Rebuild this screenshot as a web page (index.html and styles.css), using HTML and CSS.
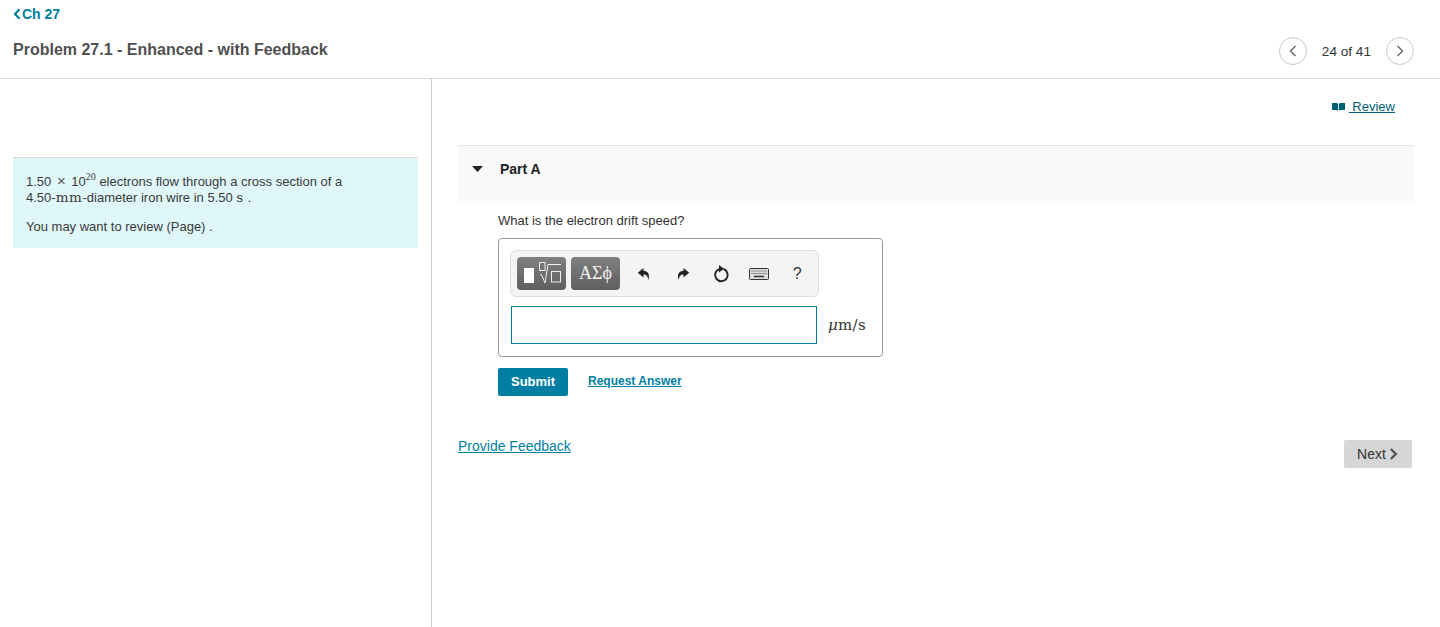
FILE: index.html
```html
<!DOCTYPE html>
<html lang="en">
<head>
<meta charset="utf-8">
<title>Problem 27.1</title>
<link rel="stylesheet" href="styles.css">
</head>
<body>
<header class="top">
  <a class="crumb" href="#"><svg class="crumb-ico" width="8" height="12" viewBox="0 0 8 12"><path d="M6.500 1.200 2 6l4.500 4.800" fill="none" stroke="#007fa3" stroke-width="2.200"/></svg>Ch 27</a>
  <div class="title-row">
    <h1 class="title">Problem 27.1 - Enhanced - with Feedback</h1>
    <nav class="pager">
      <a class="circle" href="#"><svg width="10" height="14" viewBox="0 0 10 14"><path d="M7.500 2 2.500 7l5 5" fill="none" stroke="#666" stroke-width="1.400"/></svg></a>
      <span class="count">24 of 41</span>
      <a class="circle" href="#"><svg width="10" height="14" viewBox="0 0 10 14"><path d="M2.500 2l5 5-5 5" fill="none" stroke="#666" stroke-width="1.400"/></svg></a>
    </nav>
  </div>
</header>
<main class="cols">
  <aside class="left">
    <div class="info">
      <p class="line">1.50 <span class="times">×</span> 10<sup class="sup">20</sup> electrons flow through a cross section of a<br>4.50-<span class="math">mm</span>-diameter iron wire in 5.50 <span class="math">s</span> .</p>
      <p class="line second">You may want to review (Page) .</p>
    </div>
  </aside>
  <section class="right">
    <div class="review-row">
      <a class="review" href="#"><svg class="book" width="13" height="8" viewBox="0 0 13 8"><path d="M0 0h3c1.500 0 3 .3 3.100 1v7C6 7.300 4.500 7 3 7H0zM13 0h-3c-1.500 0-3 .3-3.100 1v7c.1-.7 1.600-1 3.100-1h3z" fill="#005f73"/></svg><span class="review-text"> Review</span></a>
    </div>
    <div class="part-head">
      <svg class="caret" width="11" height="6" viewBox="0 0 11 6"><path d="M0 0h11L5.500 6z" fill="#222"/></svg>
      <span class="part-name">Part A</span>
    </div>
    <div class="part-body">
      <p class="question">What is the electron drift speed?</p>
      <div class="answer">
        <div class="toolbar">
          <button class="tpl">
            <svg width="49" height="33" viewBox="0 0 49 33"><rect x="7" y="11" width="10" height="15" fill="#fff"/><rect x="22.500" y="5.500" width="5.500" height="8" fill="none" stroke="#eee"/><path d="M23 18l1.500-.5L28 26l3-18.500h13" fill="none" stroke="#eee"/><rect x="34.500" y="14.500" width="9" height="10.500" fill="none" stroke="#eee"/></svg>
          </button>
          <button class="tpl greek">ΑΣϕ</button>
          <span class="tool t-undo"><svg width="14" height="14" viewBox="0 0 14 14"><path d="M6.500 1 .8 5.800l5.700 4.700V7.500c2.500 0 4 1 5 5.500 1.500-6-.5-9-5-9.300z" fill="#222"/></svg></span>
          <span class="tool"><svg width="14" height="14" viewBox="0 0 14 14"><path d="M7.500 1l5.700 4.800-5.700 4.700V7.500c-2.500 0-4 1-5 5.500-1.500-6 .5-9 5-9.300z" fill="#222"/></svg></span>
          <span class="tool"><svg width="17" height="19" viewBox="0 0 17 19"><path d="M10.500 5a6.300 6.300 0 1 1-4.500.1" fill="none" stroke="#222" stroke-width="1.900"/><path d="M6 1v7.600l5-3.800z" fill="#222"/></svg></span>
          <span class="tool t-keys"><svg width="20" height="12" viewBox="0 0 20 12"><rect x=".5" y=".5" width="19" height="11" rx="1" fill="#ddd" stroke="#333"/><path d="M2.500 3h15M2.500 5.500h15" stroke="#444" stroke-dasharray="1 1"/><path d="M5 8.500h10" stroke="#333" stroke-width="1.500"/></svg></span>
          <span class="tool t-help">?</span>
        </div>
        <div class="input-row">
          <input class="field" type="text" aria-label="answer">
          <span class="unit"><i class="mu">μ</i>m/s</span>
        </div>
      </div>
      <div class="actions">
        <button class="submit">Submit</button>
        <a class="request" href="#">Request Answer</a>
      </div>
    </div>
    <div class="foot">
      <a class="feedback" href="#">Provide Feedback</a>
      <button class="next">Next<svg width="9" height="12" viewBox="0 0 9 12"><path d="M1.800 1l5 5-5 5" fill="none" stroke="#555" stroke-width="2.400"/></svg></button>
    </div>
  </section>
</main>
</body>
</html>
```
FILE: styles.css
```css
* { box-sizing: border-box; }
html, body { margin: 0; height: 100%; }
body {
  font-family: "Liberation Sans", Arial, sans-serif;
  color: #333;
  background: #fff;
  display: flex;
  flex-direction: column;
  height: 627px;
  overflow: hidden;
}
a { color: #007fa3; }
p { margin: 0; }

.top { height: 79px; border-bottom: 1px solid #d9d9d9; padding: 6px 26px 0 13px; flex: none; }
.crumb { display: flex; align-items: center; gap: 1px; height: 16px; font-size: 14px; font-weight: 700; text-decoration: none; }
.crumb-ico { flex: none; }
.title-row { display: flex; justify-content: space-between; align-items: center; margin-top: 9px; height: 38px; }
.title { margin: 0; font-size: 16px; font-weight: 700; color: #505050; }
.pager { display: flex; align-items: center; gap: 15px; position: relative; top: 1px; }
.circle { width: 28px; height: 28px; border: 1px solid #c8c8c8; border-radius: 50%; display: flex; align-items: center; justify-content: center; }
.count { font-size: 13.6px; color: #333; }

.cols { display: flex; flex: 1; min-height: 0; }
.left { width: 432px; flex: none; border-right: 1px solid #ccc; padding: 78px 13px 0; }
.info { width: 405px; height: 91px; background: #e0f7f9; border-top: 1px solid #ddd; padding: 15px 13px 0; }
.line { font-size: 13px; line-height: 16px; color: #3a3a3a; }
.second { margin-top: 13px; }
.times { font-size: 15px; line-height: 1; margin: 0 2px; color: #555; }
.sup { font-family: "Liberation Serif", serif; font-size: 10px; line-height: 0; position: relative; top: -1px; vertical-align: super; }
.math { font-family: "DejaVu Serif", serif; font-size: 13.5px; line-height: 1; letter-spacing: .6px; }

.right { flex: 1; padding: 0 26px; min-width: 0; }
.review-row { height: 66px; padding: 20px 19px 0 0; display: flex; justify-content: flex-end; align-items: flex-start; }
.review { font-size: 13px; line-height: 16px; color: #005f73; display: inline-flex; align-items: center; text-decoration: none; }
.book { margin-right: 4px; }
.review-text { white-space: pre; text-decoration: underline; }
.part-head { height: 58px; background: #f9f9f9; border-top: 1px solid #e2e2e2; display: flex; align-items: flex-start; padding: 15px 0 0 14px; }
.caret { margin-top: 5px; flex: none; }
.part-name { font-size: 14px; line-height: 17px; font-weight: 700; color: #222; margin-left: 17px; }
.part-body { padding: 10px 0 0 40px; }
.question { font-size: 13px; line-height: 16px; color: #333; }
.answer { margin-top: 9px; width: 385px; height: 119px; border: 1px solid #999; border-radius: 4px; padding: 11px 0 0 12px; }
.toolbar { width: 309px; height: 47px; margin-left: -1px; background: #f4f4f4; border: 1px solid #ddd; border-radius: 6px; display: flex; align-items: center; padding-left: 6px; }
.tpl { width: 49px; height: 33px; border: 0; border-radius: 4px; padding: 0; background: linear-gradient(#808080, #5f5f5f); color: #f2f2f2; display: flex; align-items: center; justify-content: center; margin-right: 5px; }
.greek { font-family: "Liberation Serif", serif; font-size: 18px; margin-right: 0; }
.tool { display: flex; align-items: center; justify-content: center; width: 38.5px; height: 33px; color: #333; }
.t-undo { margin-left: 5px; }
.t-keys { margin-left: -1px; }
.t-help { font-size: 16px; }
.input-row { display: flex; align-items: center; margin-top: 9px; }
.field { width: 306px; height: 38px; border: 1px solid #007fa3; background: #fff; padding: 0; outline: 0; }
.unit { font-family: "DejaVu Serif", serif; font-size: 15px; margin-left: 11px; color: #333; letter-spacing: .3px; }
.mu { font-style: italic; }
.actions { display: flex; align-items: flex-start; margin-top: 11px; }
.submit { width: 70px; height: 28px; background: #007fa3; color: #fff; border: 0; border-radius: 2px; font: 700 13px "Liberation Sans", Arial, sans-serif; padding: 0 0 2px; }
.request { font-size: 12px; line-height: 14px; font-weight: 700; margin-left: 20px; margin-top: 6px; }
.foot { display: flex; justify-content: space-between; align-items: flex-start; margin-top: 44px; padding-right: 2px; }
.feedback { font-size: 14px; line-height: 16px; margin-top: -2px; }
.next { width: 68px; height: 28px; background: #d6d6d6; border: 0; border-radius: 2px; color: #333; font: 14px "Liberation Sans", Arial, sans-serif; display: flex; align-items: center; justify-content: center; gap: 3px; padding: 0 1px 0 0; }
```
